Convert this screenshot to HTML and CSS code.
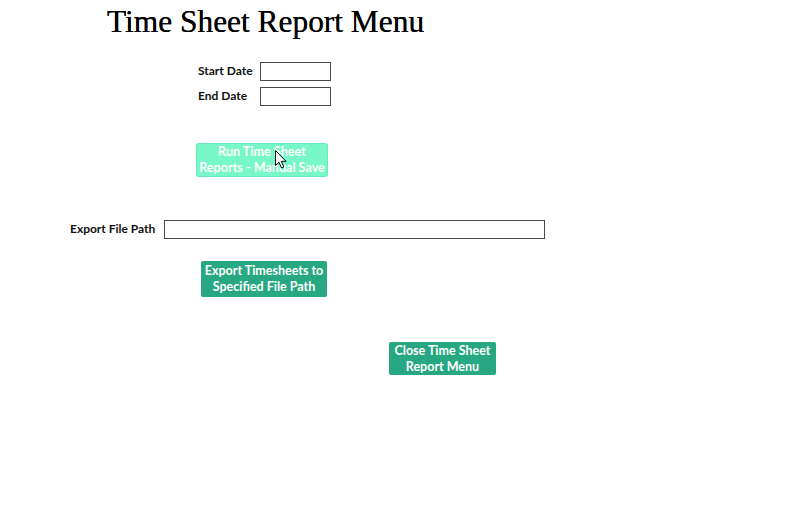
FILE: index.html
```html
<!DOCTYPE html>
<html lang="en">
<head>
    <meta charset="UTF-8">
    <meta name="viewport" content="width=device-width, initial-scale=1.0">
    <title>Time Sheet Report Menu</title>
    <link rel="stylesheet" href="styles.css">
</head>
<body>
    <div class="form">
        <h1 class="form-title">Time Sheet Report Menu</h1>

        <div class="date-fields">
            <label class="field-label" for="start-date">Start Date</label>
            <input class="text-box date-box" id="start-date" type="text">
            <label class="field-label" for="end-date">End Date</label>
            <input class="text-box date-box" id="end-date" type="text">
        </div>

        <div class="run-row">
            <button class="cmd-button cmd-hover run-button">Run Time Sheet<br>Reports - Manual Save</button>
            <!-- mouse pointer resting on the hovered button -->
            <svg class="pointer" width="12" height="19" viewBox="0 0 12 19">
                <path d="M0.5 0.5 L0.5 15.5 L4 12.2 L6.5 18 L8.8 17 L6.3 11.3 L11 11.3 Z" fill="#fff" stroke="#000" stroke-width="1"/>
            </svg>
        </div>

        <div class="export-row">
            <label class="field-label export-label" for="export-path">Export File Path</label>
            <input class="text-box path-box" id="export-path" type="text">
        </div>

        <button class="cmd-button export-button">Export Timesheets to<br>Specified File Path</button>

        <button class="cmd-button close-button">Close Time Sheet<br>Report Menu</button>
    </div>
</body>
</html>
```

FILE: styles.css
```css
* {
    margin: 0;
    padding: 0;
    box-sizing: border-box;
}

body {
    background-color: #ffffff;
    font-family: 'Lato', 'Open Sans', sans-serif;
}

.form {
    width: 794px;
    height: 530px;
    padding-top: 5px;
}

.form-title {
    margin-left: 107px;
    font-family: 'Liberation Serif', serif;
    font-size: 31.4px;
    font-weight: normal;
    line-height: 34px;
    color: #000;
    text-shadow: 0 0 0.4px #000;
}

.date-fields {
    display: grid;
    grid-template-columns: 62px 71px;
    row-gap: 6px;
    align-items: center;
    margin-left: 198px;
    margin-top: 23px;
}

.field-label {
    font-size: 12px;
    font-weight: bold;
    color: #111;
    padding-bottom: 2px;
}

.text-box {
    border: 1px solid #4a4a4a;
    background: #fff;
    height: 19px;
    outline: none;
}

.date-box {
    width: 71px;
}

.cmd-button {
    display: block;
    border: none;
    border-radius: 2px;
    color: #fff;
    font-family: 'Lato', 'Open Sans', sans-serif;
    font-size: 12.5px;
    font-weight: bold;
    line-height: 16px;
    text-align: center;
    white-space: nowrap;
    background-color: #28a882;
}

.cmd-hover {
    background-color: #78f7c9;
    box-shadow: 0 0 0 1px #6ce8bb;
}

.run-row {
    position: relative;
    margin-left: 197px;
    margin-top: 38px;
    width: 130px;
}

.run-button {
    width: 130px;
    height: 32px;
    font-size: 12.6px;
}

.pointer {
    position: absolute;
    left: 78px;
    top: 6px;
}

.export-row {
    display: flex;
    align-items: center;
    margin-left: 70px;
    margin-top: 44px;
}

.export-label {
    width: 94px;
}

.path-box {
    width: 381px;
}

.export-button {
    margin-left: 201px;
    margin-top: 22px;
    width: 126px;
    height: 36px;
}

.close-button {
    margin-left: 389px;
    margin-top: 45px;
    width: 107px;
    height: 33px;
}
```
